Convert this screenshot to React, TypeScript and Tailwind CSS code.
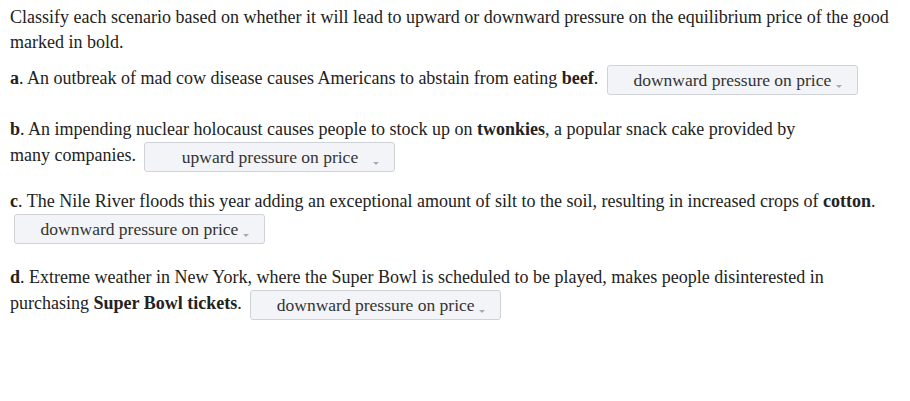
import React from 'react';

const Dropdown = ({ value }: { value: string }) => (
  <span className="relative ml-[4px] inline-flex h-[30px] w-[251px] items-center justify-center rounded-[3px] border border-[#cfd2d6] bg-[#f3f4f7] align-middle text-[17.5px] text-[#333]">
    <span>{value}</span>
    <span className="absolute right-[15px] top-[19px] h-0 w-0 border-x-[3px] border-t-[3px] border-x-transparent border-t-[#aaa]" />
  </span>
);

export default function App() {
  return (
    <div className="bg-white px-[10px] pt-[5px] text-[18px] leading-[25px] text-[#222]" style={{ fontFamily: '"Liberation Serif", "Times New Roman", serif' }}>
      <p>
        Classify each scenario based on whether it will lead to upward or downward pressure on the equilibrium price of the good
        marked in bold.
      </p>

      <p className="mt-[10px]">
        <b>a</b>. An outbreak of mad cow disease causes Americans to abstain from eating <b>beef</b>.{' '}
        <Dropdown value="downward pressure on price" />
      </p>

      <p className="mt-[22px]">
        <b>b</b>. An impending nuclear holocaust causes people to stock up on <b>twonkies</b>, a popular snack cake provided by{' '}
        <span className="whitespace-nowrap">
          many companies. <Dropdown value="upward pressure on price" />
        </span>
      </p>

      <p className="mt-[17px]">
        <b>c</b>. The Nile River floods this year adding an exceptional amount of silt to the soil, resulting in increased crops of{' '}
        <b>cotton</b>.{' '}
        <Dropdown value="downward pressure on price" />
      </p>

      <p className="mt-[21px]">
        <b>d</b>. Extreme weather in New York, where the Super Bowl is scheduled to be played, makes people disinterested in
        purchasing <b>Super Bowl tickets</b>.{' '}
        <Dropdown value="downward pressure on price" />
      </p>
    </div>
  );
}
